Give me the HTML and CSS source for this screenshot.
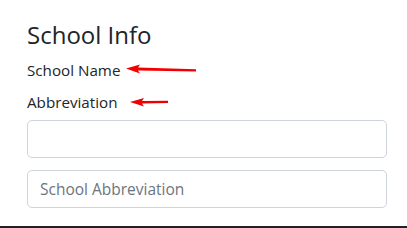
FILE: index.html
```html
<!DOCTYPE html>
<html lang="en">
<head>
  <meta charset="UTF-8" />
  <title>School Info</title>
  <link rel="stylesheet" href="styles.css">
</head>
<body>
  <div class="page">
    <h2 class="title">School Info</h2>

    <div class="label-row">
      <label for="schoolName">School Name</label>
      <svg class="arrow arrow-long" width="72" height="10" viewBox="0 0 72 10">
        <path d="M1 4.5 L15 0.5 L13 3.6 L71 5.2 L71 7.4 L13 6.4 L15 9.5 Z" fill="#f20000"/>
      </svg>
    </div>

    <div class="label-row">
      <label for="abbr">Abbreviation</label>
      <svg class="arrow arrow-short" width="40" height="10" viewBox="0 0 40 10">
        <path d="M1 5 L15 1 L13 4 L39 3.8 L39 6 L13 6.6 L15 9.5 Z" fill="#f20000"/>
      </svg>
    </div>

    <input type="text" id="schoolName" class="field" />
    <input type="text" id="abbr" class="field" placeholder="School Abbreviation" />
  </div>
  <div class="bottom-bar"></div>
</body>
</html>
```

FILE: styles.css
```css
* {
  box-sizing: border-box;
}
body {
  margin: 0;
  background: #fff;
  color: #212529;
  font-family: "Open Sans", "Noto Sans", sans-serif;
  height: 228px;
  overflow: hidden;
  display: flex;
  flex-direction: column;
}
.page {
  padding: 20px 20px 0 27px;
  display: flex;
  flex-direction: column;
  height: 226px;
}
.title {
  margin: 0 0 4px;
  font-size: 24px;
  font-weight: 400;
  line-height: 30px;
}
.label-row {
  display: flex;
  align-items: center;
  height: 32px;
}
label {
  font-size: 15.2px;
  line-height: 20px;
}
.arrow {
  display: block;
}
.arrow-long {
  margin-left: 5px;
  margin-top: -2px;
}
.arrow-short {
  margin-left: 12px;
  margin-top: -1px;
}
.field {
  width: 360px;
  height: 38px;
  margin-top: 2px;
  padding: 6px 12px;
  font-family: inherit;
  font-size: 15.5px;
  color: #495057;
  border: 1px solid #ced4da;
  border-radius: 5px;
  background: #fff;
}
.field + .field {
  margin-top: 12px;
}
.field::placeholder {
  color: #6c757d;
}
.bottom-bar {
  height: 2px;
  background: #222;
}
```
